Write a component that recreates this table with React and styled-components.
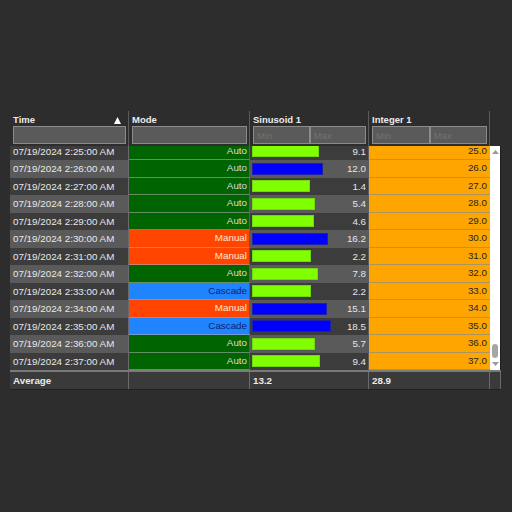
import React from 'react';
import styled, { createGlobalStyle } from 'styled-components';

const GlobalStyle = createGlobalStyle`
  body {
    margin: 0;
    background-color: #2d2d2d;
    font-family: "Liberation Sans", Arial, sans-serif;
  }
`;

const COLUMNS = '119px 121px 119px 121px 11px';
const ROW_HEIGHT = 17.5;

const MODE_STYLES = {
  Auto: { bg: '#006400', fg: '#dcdcdc' },
  Manual: { bg: '#ff4500', fg: '#ffe6dc' },
  Cascade: { bg: '#2184ff', fg: '#0b2370' },
};

const rows = [
  { time: '07/19/2024 2:25:00 AM', mode: 'Auto', sin: 9.1, int: 25.0 },
  { time: '07/19/2024 2:26:00 AM', mode: 'Auto', sin: 12.0, int: 26.0 },
  { time: '07/19/2024 2:27:00 AM', mode: 'Auto', sin: 1.4, int: 27.0 },
  { time: '07/19/2024 2:28:00 AM', mode: 'Auto', sin: 5.4, int: 28.0 },
  { time: '07/19/2024 2:29:00 AM', mode: 'Auto', sin: 4.6, int: 29.0 },
  { time: '07/19/2024 2:30:00 AM', mode: 'Manual', sin: 16.2, int: 30.0 },
  { time: '07/19/2024 2:31:00 AM', mode: 'Manual', sin: 2.2, int: 31.0 },
  { time: '07/19/2024 2:32:00 AM', mode: 'Auto', sin: 7.8, int: 32.0 },
  { time: '07/19/2024 2:33:00 AM', mode: 'Cascade', sin: 2.2, int: 33.0 },
  { time: '07/19/2024 2:34:00 AM', mode: 'Manual', sin: 15.1, int: 34.0 },
  { time: '07/19/2024 2:35:00 AM', mode: 'Cascade', sin: 18.5, int: 35.0 },
  { time: '07/19/2024 2:36:00 AM', mode: 'Auto', sin: 5.7, int: 36.0 },
  { time: '07/19/2024 2:37:00 AM', mode: 'Auto', sin: 9.4, int: 37.0 },
];

const Page = styled.div`
  padding: 111px 0 0 10px;
`;

const Grid = styled.div`
  width: 491px;
  display: flex;
  flex-direction: column;
`;

const HeaderRow = styled.div`
  display: grid;
  grid-template-columns: ${COLUMNS};
  height: 35px;
`;

const HeaderCell = styled.div`
  display: flex;
  flex-direction: column;
  padding: 3px 2px 2px 3px;
  border-right: 1px solid #5c5c5c;
  box-sizing: border-box;
`;

const HeaderSpacer = styled.div``;

const Title = styled.div`
  display: flex;
  justify-content: space-between;
  align-items: center;
  height: 12px;
  line-height: 12px;
  font-size: 9.5px;
  font-weight: bold;
  color: #ececec;
  padding-right: 5px;
`;

const FilterRow = styled.div`
  display: flex;
  height: 18px;
`;

const FilterInput = styled.input`
  flex: 1;
  min-width: 0;
  box-sizing: border-box;
  height: 18px;
  margin: 0;
  padding: 0 3px;
  background-color: #5a5a5a;
  border: 1px solid #8b8b8b;
  border-radius: 0;
  outline: none;
  font-family: "Liberation Sans", Arial, sans-serif;
  font-size: 9.5px;
  color: #ddd;

  &::placeholder {
    color: #727272;
  }
`;

const Body = styled.div`
  display: flex;
  height: 224px;
`;

const Viewport = styled.div`
  flex: 1;
  display: flex;
  flex-direction: column;
  justify-content: flex-end;
  overflow: hidden;
`;

const Row = styled.div`
  display: grid;
  grid-template-columns: 119px 121px 119px 121px;
  height: ${ROW_HEIGHT}px;
  flex-shrink: 0;
  font-size: 9.8px;
  line-height: ${ROW_HEIGHT}px;
`;

const TimeCell = styled.div`
  background-color: ${p => (p.$odd ? '#5a5a5a' : '#3c3c3c')};
  color: #e8e8e8;
  padding-left: 3px;
  border-right: 1px solid #6a6a6a;
  white-space: nowrap;
`;

const ModeCell = styled.div`
  background-color: ${p => MODE_STYLES[p.$mode].bg};
  color: ${p => MODE_STYLES[p.$mode].fg};
  text-align: right;
  padding-right: 2px;
  box-sizing: border-box;
  line-height: ${ROW_HEIGHT - 1}px;
  border-right: 1px solid #5c5c5c;
  border-bottom: 1px solid rgba(170, 170, 170, 0.6);
`;

const SinCell = styled.div`
  display: flex;
  align-items: center;
  padding: 0 2px;
  background-color: ${p => (p.$odd ? '#5a5a5a' : '#3c3c3c')};
  color: #e6e6e6;
  border-right: 1px solid #5c5c5c;
`;

const Bar = styled.div`
  height: 12px;
  box-sizing: border-box;
  background-color: ${p => (p.$high ? '#0000ff' : '#7fff00')};
  border: 1px solid ${p => (p.$high ? '#2020a8' : '#72d810')};
`;

const Value = styled.span`
  margin-left: auto;
`;

const IntCell = styled.div`
  background-color: #ffa500;
  color: #262626;
  text-align: right;
  padding-right: 3px;
  box-sizing: border-box;
  line-height: ${ROW_HEIGHT - 1}px;
  border-bottom: 1px solid rgba(140, 140, 140, 0.7);
`;

const Scrollbar = styled.div`
  width: 10px;
  background-color: #ffffff;
  border-right: 1px solid #1e1e1e;
  display: flex;
  flex-direction: column;
  align-items: center;
  padding: 4px 0 4px;
  box-sizing: content-box;
`;

const Track = styled.div`
  flex: 1;
  display: flex;
  flex-direction: column;
  justify-content: flex-end;
  padding-bottom: 4px;
`;

const Thumb = styled.div`
  width: 6px;
  height: 14px;
  border-radius: 3px;
  background-color: #a6a6a6;
`;

const FooterRow = styled.div`
  display: grid;
  grid-template-columns: ${COLUMNS};
  height: 20px;
  box-sizing: border-box;
  background-color: #3a3a3a;
  border-top: 2px solid #7a7a7a;
  border-bottom: 1px solid #222;
`;

const FooterCell = styled.div`
  padding-left: 3px;
  border-right: 1px solid #6a6a6a;
  font-size: 9.8px;
  font-weight: bold;
  line-height: 17px;
  color: #ececec;
`;

const Arrow = ({ up, color = '#9a9a9a' }) => (
  <svg width="7" height="4" viewBox="0 0 7 4">
    <polygon points={up ? '0,4 7,4 3.5,0' : '0,0 7,0 3.5,4'} fill={color} />
  </svg>
);

const SortIcon = () => (
  <svg width="7" height="7" viewBox="0 0 7 7">
    <polygon points="0,7 7,7 3.5,0" fill="#ffffff" />
  </svg>
);

const barWidth = v => 56 + 1.25 * v;

export default function App() {
  return (
    <Page>
      <GlobalStyle />
      <Grid>
        <HeaderRow>
          <HeaderCell>
            <Title>
              Time
              <SortIcon />
            </Title>
            <FilterRow>
              <FilterInput />
            </FilterRow>
          </HeaderCell>
          <HeaderCell>
            <Title>Mode</Title>
            <FilterRow>
              <FilterInput />
            </FilterRow>
          </HeaderCell>
          <HeaderCell>
            <Title>Sinusoid 1</Title>
            <FilterRow>
              <FilterInput placeholder="Min" />
              <FilterInput placeholder="Max" />
            </FilterRow>
          </HeaderCell>
          <HeaderCell>
            <Title>Integer 1</Title>
            <FilterRow>
              <FilterInput placeholder="Min" />
              <FilterInput placeholder="Max" />
            </FilterRow>
          </HeaderCell>
          <HeaderSpacer />
        </HeaderRow>

        <Body>
          <Viewport>
            {rows.map((r, i) => (
              <Row key={r.time}>
                <TimeCell $odd={i % 2 === 1}>{r.time}</TimeCell>
                <ModeCell $mode={r.mode}>{r.mode}</ModeCell>
                <SinCell $odd={i % 2 === 1}>
                  <Bar $high={r.sin > 10} style={{ width: barWidth(r.sin) }} />
                  <Value>{r.sin.toFixed(1)}</Value>
                </SinCell>
                <IntCell>{r.int.toFixed(1)}</IntCell>
              </Row>
            ))}
          </Viewport>
          <Scrollbar>
            <Arrow up />
            <Track>
              <Thumb />
            </Track>
            <Arrow />
          </Scrollbar>
        </Body>

        <FooterRow>
          <FooterCell>Average</FooterCell>
          <FooterCell />
          <FooterCell>13.2</FooterCell>
          <FooterCell>28.9</FooterCell>
          <FooterCell />
        </FooterRow>
      </Grid>
    </Page>
  );
}
